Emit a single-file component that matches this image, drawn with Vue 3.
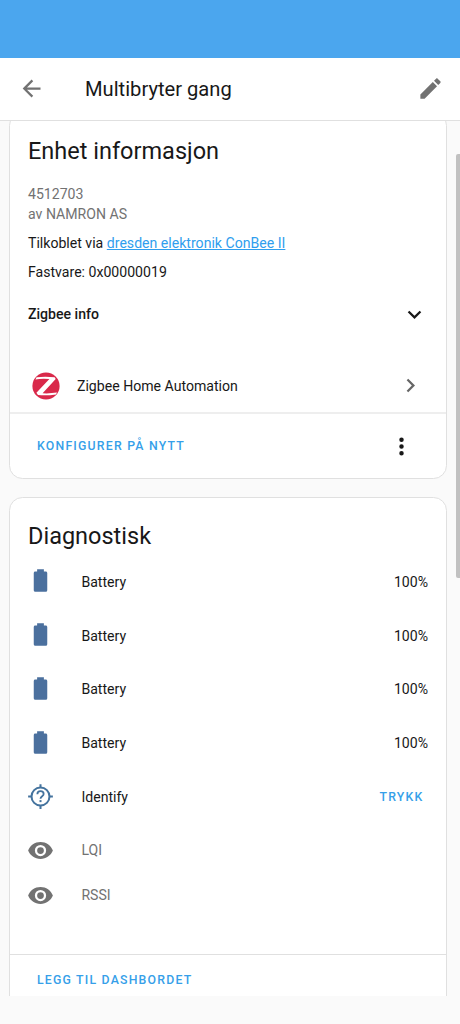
<script setup>
const batteries = [1, 2, 3, 4]
const hidden = ['LQI', 'RSSI']
</script>

<template>
  <div class="screen">
    <div class="status"></div>
    <header class="bar">
      <svg class="icon back" viewBox="0 0 24 24"><path d="M20,11V13H8L13.5,18.5L12.08,19.92L4.16,12L12.08,4.08L13.5,5.5L8,11H20Z" /></svg>
      <span class="page-title">Multibryter gang</span>
      <svg class="icon edit" viewBox="0 0 24 24"><path d="M20.71,7.04C21.1,6.65 21.1,6 20.71,5.63L18.37,3.29C18,2.9 17.35,2.9 16.96,3.29L15.12,5.12L18.87,8.87M3,17.25V21H6.75L17.81,9.93L14.06,6.18L3,17.25Z" /></svg>
    </header>
    <main class="content">
      <section class="card info">
        <h1 class="heading">Enhet informasjon</h1>
        <div class="line muted first">4512703</div>
        <div class="line muted">av NAMRON AS</div>
        <div class="line gap">Tilkoblet via <a class="link">dresden elektronik ConBee II</a></div>
        <div class="line gap">Fastvare: 0x00000019</div>
        <div class="expander">
          <span>Zigbee info</span>
          <svg class="icon" viewBox="0 0 24 24"><path d="M7.41,8.58L12,13.17L16.59,8.58L18,10L12,16L6,10L7.41,8.58Z" /></svg>
        </div>
        <div class="integration">
          <svg class="logo" viewBox="0 0 28 28">
            <circle cx="14" cy="14" r="13.6" fill="#d9294a" />
            <path d="M4.6 5.2Q13 4.1 22.6 5.2L23.7 7L10.6 21.3Q18 21.7 25 20.6L24 22.4Q14 23.9 6 22.9L4.4 20.8L17.4 7.1Q10 6.5 3.4 7.4Z" fill="#fff" />
          </svg>
          <span class="name">Zigbee Home Automation</span>
          <svg class="icon next" viewBox="0 0 24 24"><path d="M8.59,16.58L13.17,12L8.59,7.41L10,6L16,12L10,18L8.59,16.58Z" /></svg>
        </div>
        <div class="actions">
          <span class="button">KONFIGURER PÅ NYTT</span>
          <svg class="icon" viewBox="0 0 24 24"><path d="M12,16A2,2 0 0,1 14,18A2,2 0 0,1 12,20A2,2 0 0,1 10,18A2,2 0 0,1 12,16M12,10A2,2 0 0,1 14,12A2,2 0 0,1 12,14A2,2 0 0,1 10,12A2,2 0 0,1 12,10M12,4A2,2 0 0,1 14,6A2,2 0 0,1 12,8A2,2 0 0,1 10,6A2,2 0 0,1 12,4Z" /></svg>
        </div>
      </section>

      <section class="card diag">
        <h1 class="heading">Diagnostisk</h1>
        <div v-for="b in batteries" :key="b" class="row">
          <svg class="icon battery" viewBox="0 0 24 24"><path d="M16.67,4H15V2H9V4H7.33A1.33,1.33 0 0,0 6,5.33V20.67C6,21.4 6.6,22 7.33,22H16.67A1.33,1.33 0 0,0 18,20.67V5.33C18,4.6 17.4,4 16.67,4Z" /></svg>
          <span class="label">Battery</span>
          <span class="value">100%</span>
        </div>
        <div class="row">
          <svg class="icon identify" viewBox="0 0 24 24">
            <circle cx="12" cy="12" r="8" />
            <path d="M12 1V4.5M12 19.5V23M1 12H4.5M19.5 12H23" />
            <path class="question" d="M9.2 9.9C9.2 8.2 10.4 7.3 12 7.3S14.8 8.3 14.8 9.8C14.8 11.7 12 11.8 12 14" />
            <path d="M12 15.2V17" />
          </svg>
          <span class="label">Identify</span>
          <span class="button press">TRYKK</span>
        </div>
        <div class="hidden-rows">
          <div v-for="h in hidden" :key="h" class="row small">
            <svg class="icon" viewBox="0 0 24 24"><path d="M12,9A3,3 0 0,0 9,12A3,3 0 0,0 12,15A3,3 0 0,0 15,12A3,3 0 0,0 12,9M12,17A5,5 0 0,1 7,12A5,5 0 0,1 12,7A5,5 0 0,1 17,12A5,5 0 0,1 12,17M12,4.5C7,4.5 2.73,7.61 1,12C2.73,16.39 7,19.5 12,19.5C17,19.5 21.27,16.39 23,12C21.27,7.61 17,4.5 12,4.5Z" /></svg>
            <span class="label">{{ h }}</span>
          </div>
        </div>
        <div class="footer"><span class="button">LEGG TIL DASHBORDET</span></div>
      </section>
      <div class="scrollbar"></div>
    </main>
  </div>
</template>

<style>
body { background: #fafafa; }
</style>

<style scoped>
.screen {
  width: 460px;
  height: 1024px;
  overflow: hidden;
  background: #fafafa;
  color: #181818;
  font-family: Roboto, sans-serif;
  font-size: 14.1px;
}
.status { height: 58px; background: #4ba6ee; }
.bar {
  display: flex;
  align-items: center;
  box-sizing: border-box;
  height: 63px;
  padding: 0 16px 1px 18px;
  border-bottom: 1px solid #e0e0e0;
  background: #fff;
}
.icon { flex: none; width: 27px; height: 27px; fill: currentColor; }
.back, .edit { color: #727272; }
.page-title { flex: 1; margin-left: 40px; font-size: 20.15px; }
.content { position: relative; height: 875px; overflow: hidden; }
.card {
  box-sizing: border-box;
  width: 438px;
  margin-left: 9px;
  border: 1px solid #e0e0e0;
  border-radius: 13.5px;
  background: #fff;
}
.info { display: flow-root; height: 367px; margin-top: -9px; }
.diag { height: 540px; margin-top: 18px; }
.heading {
  margin: 0;
  padding: 20px 18px 0;
  font-size: 23.5px;
  font-weight: 400;
  line-height: 36px;
}
.line { padding-left: 18px; line-height: 20px; white-space: nowrap; }
.muted { color: #727272; }
.first { margin-top: 15px; }
.gap { margin-top: 9px; }
.link { color: #2f9eee; text-decoration: underline; }
.expander {
  display: flex;
  align-items: center;
  justify-content: space-between;
  height: 48px;
  margin-top: 8px;
  padding: 0 18px;
  font-weight: 500;
}
.integration {
  display: flex;
  align-items: center;
  height: 53px;
  margin-top: 21px;
  padding: 0 22px;
  border-bottom: 2px solid #eeeeee;
}
.logo { width: 28px; height: 28px; }
.name { flex: 1; margin-left: 17px; }
.next { color: #666; }
.actions {
  display: flex;
  align-items: center;
  justify-content: space-between;
  height: 64px;
  padding: 0 31px 0 27px;
}
.button { color: #369fe9; font-size: 12.3px; font-weight: 500; letter-spacing: 1.2px; }
.actions .button { padding-bottom: 1px; }
.row {
  display: flex;
  align-items: center;
  height: 53.8px;
  padding: 0 18px 0 17.4px;
}
.label { flex: 1; margin-left: 27px; }
.label, .value { padding-top: 2px; }
.battery { color: #4b709e; }
.identify { fill: none; stroke: #44739e; stroke-width: 1.8; }
.question { stroke-width: 1.6; }
.press { margin-right: 4.5px; padding-top: 1px; }
.hidden-rows { margin-top: 5px; color: #727272; }
.small { height: 45px; }
.small .label { padding-top: 0; }
.footer {
  display: flex;
  align-items: center;
  height: 50px;
  margin-top: 36px;
  padding-left: 27px;
  border-top: 1px solid #e0e0e0;
}
.scrollbar {
  position: absolute;
  top: 33px;
  right: 0;
  width: 4px;
  height: 424px;
  border-radius: 2px 0 0 2px;
  background: #c1c1c1;
}
</style>
